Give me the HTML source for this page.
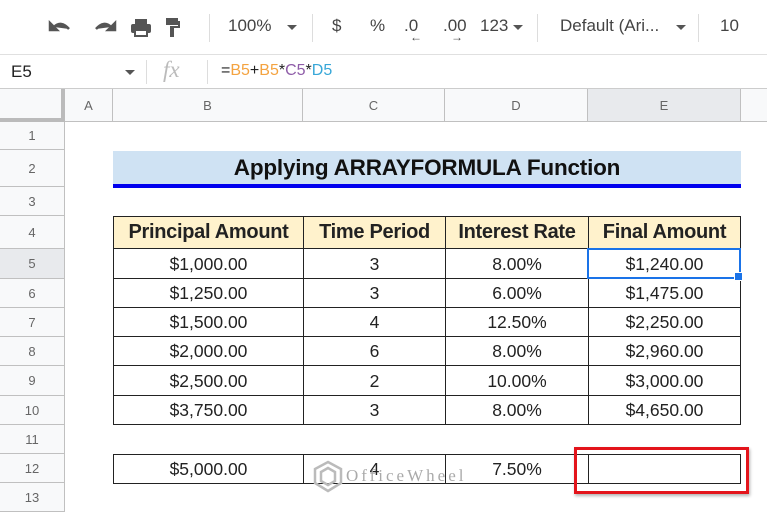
<!DOCTYPE html>
<html><head><meta charset="utf-8"><style>
*{margin:0;padding:0;box-sizing:border-box}
body{width:767px;height:515px;overflow:hidden;background:#fff;font-family:"Liberation Sans",Arial,sans-serif;position:relative}
.a{position:absolute}
.tb{color:#444;font-size:17px;top:16px}
.rh{position:absolute;left:0;width:65px;background:#f8f9fa;border-bottom:1px solid #c0c0c0;border-right:1px solid #c0c0c0;color:#666;font-size:13px;text-align:center}
.ch{position:absolute;top:89px;height:33px;background:#f8f9fa;border-right:1px solid #c0c0c0;border-bottom:1px solid #c0c0c0;color:#666;font-size:13px;text-align:center;line-height:33px}
.c{position:absolute;border-right:1px solid #222;border-bottom:1px solid #222;text-align:center;font-size:17.5px;color:#222;white-space:nowrap}
.h{background:#fff2cc;font-weight:bold;font-size:20px;letter-spacing:-0.3px}
</style></head><body>
<svg class="a" style="left:48px;top:15px" width="160" height="24" viewBox="0 0 160 24">
<path d="M6 12 L2 8 L2 15 L9 15 L6 12 M6 12 Q13 5 21 14" fill="#555" stroke="#555" stroke-width="2.5"/>
<path d="M63 12 L67 8 L67 15 L60 15 L63 12 M63 12 Q56 5 48 14" fill="#555" stroke="#555" stroke-width="2.5"/>
<rect x="87" y="4" width="12" height="5" fill="#555"/><rect x="83" y="9" width="20" height="9" rx="2" fill="#555"/><rect x="87" y="15" width="12" height="6" fill="#fff" stroke="#555" stroke-width="2"/>
<rect x="118" y="3" width="12" height="7" fill="#555"/><rect x="130" y="6" width="2" height="6" fill="#555"/><rect x="122" y="11" width="10" height="2" fill="#555"/><rect x="122" y="12" width="4" height="10" fill="#555"/>
</svg>
<div class="a" style="left:209px;top:14px;width:1px;height:28px;background:#ddd"></div>
<div class="a tb" style="left:228px">100%</div>
<div class="a" style="left:287px;top:25px;border:5px solid transparent;border-top:5px solid #555"></div>
<div class="a" style="left:312px;top:14px;width:1px;height:28px;background:#ddd"></div>
<div class="a tb" style="left:332px">$</div>
<div class="a tb" style="left:370px">%</div>
<div class="a tb" style="left:404px">.0<span style="position:absolute;left:6px;top:14px;font-size:12px">←</span></div>
<div class="a tb" style="left:443px">.00<span style="position:absolute;left:8px;top:14px;font-size:12px">→</span></div>
<div class="a tb" style="left:480px">123</div>
<div class="a" style="left:513px;top:25px;border:5px solid transparent;border-top:5px solid #555"></div>
<div class="a" style="left:537px;top:14px;width:1px;height:28px;background:#ddd"></div>
<div class="a tb" style="left:560px">Default (Ari...</div>
<div class="a" style="left:676px;top:25px;border:5px solid transparent;border-top:5px solid #555"></div>
<div class="a" style="left:698px;top:14px;width:1px;height:28px;background:#ddd"></div>
<div class="a tb" style="left:720px">10</div>
<div class="a" style="left:0;top:54px;width:767px;height:1px;background:#e0e0e0"></div>
<div class="a" style="left:11px;top:62px;font-size:17px;color:#222">E5</div>
<div class="a" style="left:125px;top:70px;border:5px solid transparent;border-top:5px solid #555"></div>
<div class="a" style="left:146px;top:60px;width:1px;height:24px;background:#ddd"></div>
<div class="a" style="left:163px;top:57px;font-size:23px;color:#bbb;font-family:'Liberation Serif',serif;font-style:italic">fx</div>
<div class="a" style="left:207px;top:60px;width:1px;height:24px;background:#ddd"></div>
<div class="a" style="left:221px;top:62px;font-size:16px;color:#222">=<span style="color:#f4a340">B5</span>+<span style="color:#f4a340">B5</span>*<span style="color:#8e5ca8">C5</span>*<span style="color:#37a7d8">D5</span></div>
<div class="a" style="left:0;top:88px;width:767px;height:1px;background:#ccc"></div>
<div class="a" style="left:0;top:89px;width:65px;height:33px;background:#f8f9fa;border-right:4px solid #bbb;border-bottom:4px solid #bbb"></div>
<div class="ch" style="left:65px;width:48px">A</div>
<div class="ch" style="left:113px;width:190px">B</div>
<div class="ch" style="left:303px;width:142px">C</div>
<div class="ch" style="left:445px;width:143px">D</div>
<div class="ch" style="left:588px;width:153px;background:#e8eaed">E</div>
<div class="ch" style="left:741px;width:30px"></div>
<div class="rh" style="top:122px;height:28px;line-height:28px">1</div>
<div class="rh" style="top:150px;height:37px;line-height:37px">2</div>
<div class="rh" style="top:187px;height:29px;line-height:29px">3</div>
<div class="rh" style="top:216px;height:33px;line-height:33px">4</div>
<div class="rh" style="top:249px;height:30px;line-height:30px;background:#e8eaed">5</div>
<div class="rh" style="top:279px;height:29px;line-height:29px">6</div>
<div class="rh" style="top:308px;height:29px;line-height:29px">7</div>
<div class="rh" style="top:337px;height:29px;line-height:29px">8</div>
<div class="rh" style="top:366px;height:30px;line-height:30px">9</div>
<div class="rh" style="top:396px;height:29px;line-height:29px">10</div>
<div class="rh" style="top:425px;height:29px;line-height:29px">11</div>
<div class="rh" style="top:454px;height:29px;line-height:29px">12</div>
<div class="rh" style="top:483px;height:29px;line-height:29px">13</div>
<div class="a" style="left:113px;top:151px;width:628px;height:33px;background:#cfe2f3;text-align:center;font-weight:bold;font-size:22.5px;line-height:34px;color:#111;letter-spacing:-0.2px">Applying ARRAYFORMULA Function</div>
<div class="a" style="left:113px;top:184px;width:628px;height:4px;background:#0000ee"></div>
<div class="a" style="left:113px;top:216px;width:628px;height:1px;background:#222"></div>
<div class="a" style="left:113px;top:216px;width:1px;height:209px;background:#222"></div>
<div class="c h" style="left:114px;top:217px;width:190px;height:32px;line-height:31px">Principal Amount</div>
<div class="c h" style="left:304px;top:217px;width:142px;height:32px;line-height:31px">Time Period</div>
<div class="c h" style="left:446px;top:217px;width:143px;height:32px;line-height:31px">Interest Rate</div>
<div class="c h" style="left:589px;top:217px;width:152px;height:32px;line-height:31px">Final Amount</div>
<div class="c" style="left:114px;top:249px;width:190px;height:30px;line-height:30px">$1,000.00</div><div class="c" style="left:304px;top:249px;width:142px;height:30px;line-height:30px">3</div><div class="c" style="left:446px;top:249px;width:143px;height:30px;line-height:30px">8.00%</div><div class="c" style="left:589px;top:249px;width:152px;height:30px;line-height:30px">$1,240.00</div>
<div class="c" style="left:114px;top:279px;width:190px;height:29px;line-height:29px">$1,250.00</div><div class="c" style="left:304px;top:279px;width:142px;height:29px;line-height:29px">3</div><div class="c" style="left:446px;top:279px;width:143px;height:29px;line-height:29px">6.00%</div><div class="c" style="left:589px;top:279px;width:152px;height:29px;line-height:29px">$1,475.00</div>
<div class="c" style="left:114px;top:308px;width:190px;height:29px;line-height:29px">$1,500.00</div><div class="c" style="left:304px;top:308px;width:142px;height:29px;line-height:29px">4</div><div class="c" style="left:446px;top:308px;width:143px;height:29px;line-height:29px">12.50%</div><div class="c" style="left:589px;top:308px;width:152px;height:29px;line-height:29px">$2,250.00</div>
<div class="c" style="left:114px;top:337px;width:190px;height:29px;line-height:29px">$2,000.00</div><div class="c" style="left:304px;top:337px;width:142px;height:29px;line-height:29px">6</div><div class="c" style="left:446px;top:337px;width:143px;height:29px;line-height:29px">8.00%</div><div class="c" style="left:589px;top:337px;width:152px;height:29px;line-height:29px">$2,960.00</div>
<div class="c" style="left:114px;top:366px;width:190px;height:30px;line-height:30px">$2,500.00</div><div class="c" style="left:304px;top:366px;width:142px;height:30px;line-height:30px">2</div><div class="c" style="left:446px;top:366px;width:143px;height:30px;line-height:30px">10.00%</div><div class="c" style="left:589px;top:366px;width:152px;height:30px;line-height:30px">$3,000.00</div>
<div class="c" style="left:114px;top:396px;width:190px;height:29px;line-height:29px">$3,750.00</div><div class="c" style="left:304px;top:396px;width:142px;height:29px;line-height:29px">3</div><div class="c" style="left:446px;top:396px;width:143px;height:29px;line-height:29px">8.00%</div><div class="c" style="left:589px;top:396px;width:152px;height:29px;line-height:29px">$4,650.00</div>
<div class="a" style="left:113px;top:454px;width:628px;height:1px;background:#222"></div>
<div class="a" style="left:113px;top:454px;width:1px;height:30px;background:#222"></div>
<div class="c" style="left:114px;top:455px;width:190px;height:29px;line-height:28px">$5,000.00</div><div class="c" style="left:304px;top:455px;width:142px;height:29px;line-height:28px">4</div><div class="c" style="left:446px;top:455px;width:143px;height:29px;line-height:28px">7.50%</div><div class="c" style="left:589px;top:455px;width:152px;height:29px"></div>
<svg class="a" style="left:312px;top:460px" width="32" height="34" viewBox="0 0 32 34"><path d="M16 2 L29 9 L29 23 L16 31 L3 23 L3 9 Z M16 8 L23 12 L23 21 L16 25 L9 21 L9 12 Z" fill="none" stroke="#bbb" stroke-width="2.5"/></svg>
<div class="a" style="left:346px;top:466px;font-family:'Liberation Serif',serif;font-size:17px;letter-spacing:3px;color:#aaa">OfficeWheel</div>
<div class="a" style="left:587px;top:248px;width:154px;height:31px;border:2px solid #1a73e8"></div>
<div class="a" style="left:734px;top:272px;width:9px;height:9px;background:#1a73e8;border:1px solid #fff"></div>
<div class="a" style="left:574px;top:447px;width:175px;height:47px;border:3px solid #e3141b;box-shadow:1px 2px 3px rgba(0,0,0,.3)"></div>
</body></html>
